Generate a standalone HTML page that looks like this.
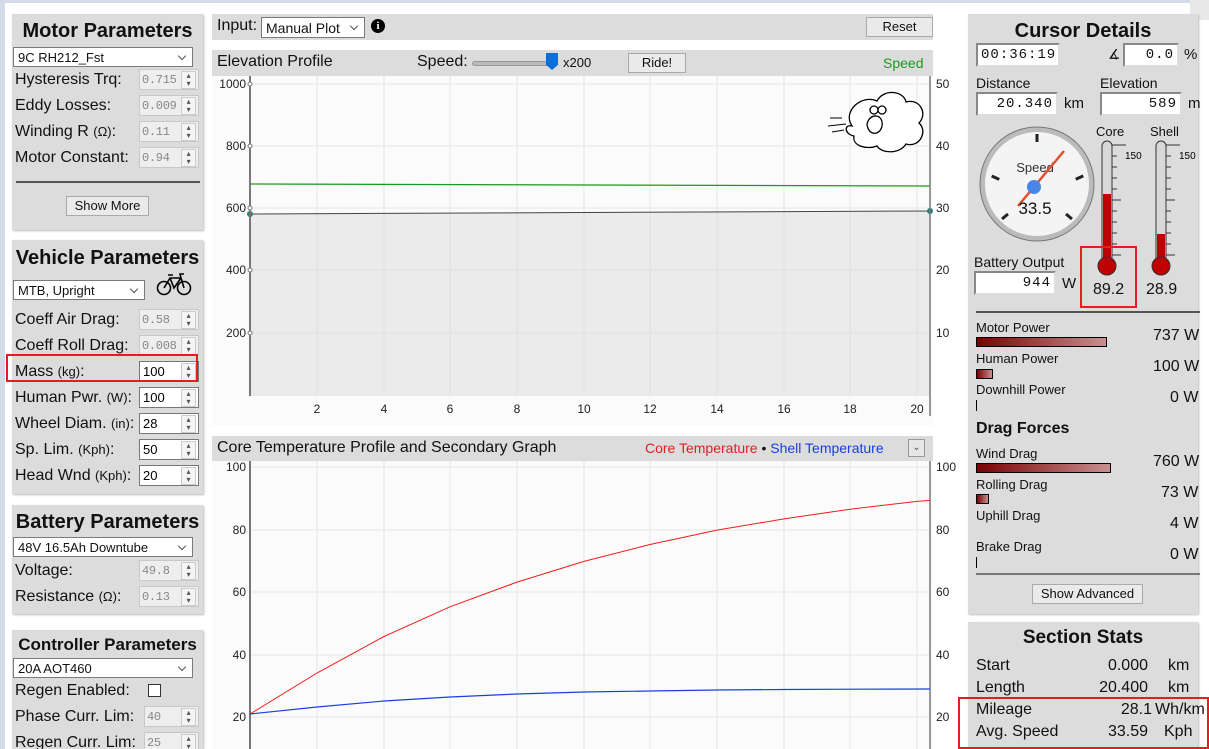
<!DOCTYPE html>
<html style="width:1209px;height:749px;overflow:hidden"><head><meta charset="utf-8"><style>
*{margin:0;padding:0;box-sizing:border-box}
body{width:1209px;height:749px;overflow:hidden;background:#fff;font-family:"Liberation Sans",Arial,sans-serif;color:#111;position:relative}
.a{position:absolute}
.pn{position:absolute;background:#dcdcdc;box-shadow:1px 1px 2px #bbb}
.h{font-weight:bold;font-size:20px;text-align:center;position:absolute;left:0;right:0}
.lb{position:absolute;font-size:16px;white-space:nowrap}
.lb small{font-size:13px}
.sel{position:absolute;background:#fff;border:1px solid #7a7a7a;font-size:13px;padding:2px 4px;white-space:nowrap}
.sel:after{content:"";position:absolute;right:7px;top:5px;width:5px;height:5px;border-right:1px solid #555;border-bottom:1px solid #555;transform:rotate(45deg)}
.sp{position:absolute;width:60px;height:21px;border:1px solid #c8c8c8;background:#eee;font-size:12px;color:#888;padding:3px 2px;font-family:"Liberation Mono",monospace;overflow:hidden;white-space:nowrap;letter-spacing:-0.3px}
.sp.on{background:#fff;border-color:#777;color:#000;font-family:"Liberation Sans",sans-serif;font-size:13px;padding:2px 3px;letter-spacing:0}
.sp:after{content:"▴\A▾";white-space:pre;position:absolute;right:2px;top:1px;width:13px;font-size:8px;line-height:8px;text-align:center;border:1px solid #ccc;background:#f4f4f4;color:#555;font-family:"Liberation Sans",sans-serif}
.btn{position:absolute;background:#eaeaea;border:1px solid #aaa;font-size:13px;text-align:center}
.box{position:absolute;background:#fff;border:2px solid #888;border-right-color:#ddd;border-bottom-color:#ddd;font-family:"Liberation Mono",monospace;font-size:14px;text-align:right;padding:2px 3px;letter-spacing:1px;white-space:nowrap;overflow:hidden}
.bar{position:absolute;height:10px;border:1px solid #000;background:linear-gradient(90deg,#7a0000,#c89090)}
.red{position:absolute;border:2px solid #e02020}
</style></head><body>
<div class="a" style="left:0;top:0;width:5px;height:749px;background:#d3dbe8"></div>
<div class="a" style="left:0;top:0;width:1209px;height:3px;background:#d3dbe8"></div>
<div class="a" style="left:1190px;top:0;width:19px;height:20px;background:#e8e8e8"></div>

<!-- Motor -->
<div class="pn" style="left:12px;top:14px;width:191px;height:216px">
<div class="h" style="top:6px">Motor Parameters</div>
<div class="sel" style="left:1px;top:33px;width:180px;height:20px">9C RH212_Fst</div>
<div class="lb" style="left:3px;top:57px">Hysteresis Trq:</div><div class="sp" style="left:127px;top:55px">0.715</div>
<div class="lb" style="left:3px;top:83px">Eddy Losses:</div><div class="sp" style="left:127px;top:81px">0.009</div>
<div class="lb" style="left:3px;top:109px">Winding R <small>(Ω)</small>:</div><div class="sp" style="left:127px;top:107px">0.11</div>
<div class="lb" style="left:3px;top:135px">Motor Constant:</div><div class="sp" style="left:127px;top:133px">0.94</div>
<div class="a" style="left:4px;top:167px;width:184px;height:2px;background:#555"></div>
<div class="btn" style="left:54px;top:182px;width:83px;height:20px;line-height:18px">Show More</div>
</div>
<!-- Vehicle -->
<div class="pn" style="left:12px;top:240px;width:191px;height:254px">
<div class="h" style="top:7px">Vehicle Parameters</div>
<div class="sel" style="left:1px;top:40px;width:132px;height:20px">MTB, Upright</div>
<svg class="a" style="left:144px;top:32px" width="36" height="24" viewBox="0 0 36 24" fill="none" stroke="#000" stroke-width="1.6"><circle cx="8" cy="16" r="6.5"/><circle cx="28" cy="16" r="6.5"/><path d="M8 16 L14 6 L25 6 L28 16 M14 6 L18 16 L25 6 M12 3 L17 3 M25 6 L24 2 L28 2"/></svg>
<div class="lb" style="left:3px;top:71px">Coeff Air Drag:</div><div class="sp" style="left:127px;top:69px">0.58</div>
<div class="lb" style="left:3px;top:97px">Coeff Roll Drag:</div><div class="sp" style="left:127px;top:95px">0.008</div>
<div class="lb" style="left:3px;top:123px">Mass <small>(kg)</small>:</div><div class="sp on" style="left:127px;top:121px">100</div>
<div class="lb" style="left:3px;top:149px">Human Pwr. <small>(W)</small>:</div><div class="sp on" style="left:127px;top:147px">100</div>
<div class="lb" style="left:3px;top:175px">Wheel Diam. <small>(in)</small>:</div><div class="sp on" style="left:127px;top:173px">28</div>
<div class="lb" style="left:3px;top:201px">Sp. Lim. <small>(Kph)</small>:</div><div class="sp on" style="left:127px;top:199px">50</div>
<div class="lb" style="left:3px;top:227px">Head Wnd <small>(Kph)</small>:</div><div class="sp on" style="left:127px;top:225px">20</div>
</div>
<div class="red" style="left:6px;top:354px;width:192px;height:28px"></div>
<!-- Battery -->
<div class="pn" style="left:12px;top:505px;width:191px;height:109px">
<div class="h" style="top:6px">Battery Parameters</div>
<div class="sel" style="left:1px;top:32px;width:180px;height:20px">48V 16.5Ah Downtube</div>
<div class="lb" style="left:3px;top:57px">Voltage:</div><div class="sp" style="left:127px;top:55px">49.8</div>
<div class="lb" style="left:3px;top:83px">Resistance <small>(Ω)</small>:</div><div class="sp" style="left:127px;top:81px">0.13</div>
</div>
<!-- Controller -->
<div class="pn" style="left:12px;top:630px;width:191px;height:119px">
<div class="h" style="top:5px;font-size:17px">Controller Parameters</div>
<div class="sel" style="left:1px;top:28px;width:180px;height:20px">20A AOT460</div>
<div class="lb" style="left:3px;top:52px">Regen Enabled:</div>
<div class="a" style="left:136px;top:54px;width:13px;height:13px;border:1px solid #333;background:#fff"></div>
<div class="lb" style="left:3px;top:78px">Phase Curr. Lim:</div><div class="sp" style="left:132px;top:76px;width:55px">40</div>
<div class="lb" style="left:3px;top:104px">Regen Curr. Lim:</div><div class="sp" style="left:132px;top:102px;width:55px">25</div>
</div>

<!-- Input bar -->
<div class="a" style="left:212px;top:14px;width:721px;height:26px;background:#dcdcdc"></div>
<div class="lb" style="left:217px;top:17px">Input:</div>
<div class="sel" style="left:261px;top:17px;width:104px;height:21px;font-size:14px">Manual Plot</div>
<div class="a" style="left:371px;top:19px;width:14px;height:14px;border-radius:50%;background:#000;color:#fff;font:bold 11px 'Liberation Serif',serif;text-align:center;line-height:14px">i</div>
<div class="btn" style="left:866px;top:17px;width:67px;height:20px;line-height:18px">Reset</div>

<!-- Elevation -->
<div class="a" style="left:212px;top:50px;width:721px;height:376px;background:#fbfbfb"></div>
<div class="a" style="left:212px;top:50px;width:721px;height:26px;background:#dcdcdc"></div>
<div class="lb" style="left:217px;top:53px">Elevation Profile</div>
<div class="lb" style="left:417px;top:53px">Speed:</div>
<div class="a" style="left:472px;top:61px;width:80px;height:5px;border-radius:3px;background:#bbb;border:1px solid #999"></div>
<div class="a" style="left:546px;top:53px;width:12px;height:17px;background:#0a6fd6;clip-path:polygon(0 0,100% 0,100% 70%,50% 100%,0 70%)"></div>
<div class="lb" style="left:563px;top:55px;font-size:13px">x200</div>
<div class="btn" style="left:628px;top:53px;width:58px;height:20px;line-height:18px">Ride!</div>
<div class="lb" style="left:883px;top:55px;font-size:14px;color:#1a9a1a">Speed</div>
<svg class="a" style="left:212px;top:76px" width="750" height="350">
<g stroke="#e6e6e6" stroke-width="1">
<line x1="38" y1="8" x2="718" y2="8"/><line x1="38" y1="70" x2="718" y2="70"/><line x1="38" y1="132" x2="718" y2="132"/><line x1="38" y1="194" x2="718" y2="194"/><line x1="38" y1="257" x2="718" y2="257"/>
<line x1="105" y1="0" x2="105" y2="320"/><line x1="172" y1="0" x2="172" y2="320"/><line x1="238" y1="0" x2="238" y2="320"/><line x1="305" y1="0" x2="305" y2="320"/><line x1="372" y1="0" x2="372" y2="320"/><line x1="438" y1="0" x2="438" y2="320"/><line x1="505" y1="0" x2="505" y2="320"/><line x1="572" y1="0" x2="572" y2="320"/><line x1="638" y1="0" x2="638" y2="320"/><line x1="705" y1="0" x2="705" y2="320"/>
</g>
<polygon points="38,138 718,135 718,320 38,320" fill="#ebebeb"/>
<g stroke="#e0e0e0"><line x1="38" y1="194" x2="718" y2="194"/><line x1="38" y1="257" x2="718" y2="257"/><line x1="105" y1="137" x2="105" y2="320"/><line x1="172" y1="137" x2="172" y2="320"/><line x1="238" y1="137" x2="238" y2="320"/><line x1="305" y1="137" x2="305" y2="320"/><line x1="372" y1="137" x2="372" y2="320"/><line x1="438" y1="136" x2="438" y2="320"/><line x1="505" y1="136" x2="505" y2="320"/><line x1="572" y1="136" x2="572" y2="320"/><line x1="638" y1="136" x2="638" y2="320"/><line x1="705" y1="136" x2="705" y2="320"/></g>
<line x1="38" y1="138" x2="718" y2="135" stroke="#444"/>
<line x1="38" y1="108" x2="718" y2="110" stroke="#1a9a1a" stroke-width="1.2"/>
<circle cx="38" cy="138" r="3" fill="#2a7a7a"/><circle cx="718" cy="135" r="3" fill="#2a7a7a"/>
<line x1="38" y1="0" x2="38" y2="320" stroke="#777" stroke-width="2"/>
<line x1="718" y1="0" x2="718" y2="340" stroke="#777" stroke-width="1.5"/>
<g fill="#fff" stroke="#777"><circle cx="38" cy="8" r="2"/><circle cx="38" cy="70" r="2"/><circle cx="38" cy="132" r="2"/><circle cx="38" cy="194" r="2"/><circle cx="38" cy="257" r="2"/></g>
<g font-size="12" fill="#222" text-anchor="end" font-family="Liberation Sans"><text x="34" y="12">1000</text><text x="34" y="74">800</text><text x="34" y="136">600</text><text x="34" y="198">400</text><text x="34" y="261">200</text></g>
<g font-size="12" fill="#222" font-family="Liberation Sans"><text x="724" y="12">50</text><text x="724" y="74">40</text><text x="724" y="136">30</text><text x="724" y="198">20</text><text x="724" y="261">10</text></g>
<g font-size="12" fill="#222" text-anchor="middle" font-family="Liberation Sans"><text x="105" y="337">2</text><text x="172" y="337">4</text><text x="238" y="337">6</text><text x="305" y="337">8</text><text x="372" y="337">10</text><text x="438" y="337">12</text><text x="505" y="337">14</text><text x="572" y="337">16</text><text x="638" y="337">18</text><text x="705" y="337">20</text></g>
<g fill="#fff" stroke="#000" stroke-width="1.3">
<path d="M640 50 C630 35 650 18 665 25 C672 12 692 15 694 26 C708 22 716 38 707 47 C716 55 708 72 694 68 C688 78 670 78 665 70 C655 74 640 70 642 60 C632 58 632 48 640 50 Z"/>
<path d="M655 48 C658 36 672 38 670 50 C668 60 656 60 655 48 Z"/>
<circle cx="662" cy="34" r="4"/><circle cx="670" cy="34" r="4"/>
</g>
<g stroke="#000" stroke-width="1"><line x1="618" y1="42" x2="630" y2="42"/><line x1="616" y1="50" x2="634" y2="48"/><line x1="620" y1="56" x2="632" y2="54"/></g>
</svg>

<!-- Secondary -->
<div class="a" style="left:212px;top:436px;width:721px;height:313px;background:#fbfbfb"></div>
<div class="a" style="left:212px;top:436px;width:721px;height:25px;background:#dcdcdc"></div>
<div class="lb" style="left:217px;top:439px">Core Temperature Profile and Secondary Graph</div>
<div class="lb" style="left:645px;top:440px;font-size:14px"><span style="color:#e02020">Core Temperature</span> • <span style="color:#1a3ee0">Shell Temperature</span></div>
<div class="a" style="left:908px;top:439px;width:17px;height:18px;border:1px solid #999;background:#e6e6e6;font-size:10px;text-align:center;line-height:16px;color:#555">⌄</div>
<svg class="a" style="left:212px;top:461px" width="750" height="290">
<g stroke="#e6e6e6"><line x1="38" y1="6" x2="718" y2="6"/><line x1="38" y1="69" x2="718" y2="69"/><line x1="38" y1="131" x2="718" y2="131"/><line x1="38" y1="194" x2="718" y2="194"/><line x1="38" y1="256" x2="718" y2="256"/>
<line x1="105" y1="0" x2="105" y2="290"/><line x1="172" y1="0" x2="172" y2="290"/><line x1="238" y1="0" x2="238" y2="290"/><line x1="305" y1="0" x2="305" y2="290"/><line x1="372" y1="0" x2="372" y2="290"/><line x1="438" y1="0" x2="438" y2="290"/><line x1="505" y1="0" x2="505" y2="290"/><line x1="572" y1="0" x2="572" y2="290"/><line x1="638" y1="0" x2="638" y2="290"/><line x1="705" y1="0" x2="705" y2="290"/></g>
<line x1="38" y1="0" x2="38" y2="290" stroke="#777" stroke-width="2"/>
<line x1="718" y1="0" x2="718" y2="290" stroke="#777" stroke-width="1.5"/>
<polyline fill="none" stroke="#ee1c1c" points="38,253 105,212 172,175.5 238,145.8 305,121.1 372,100.4 438,83.5 505,69.1 572,57.9 638,48.2 705,40.4 718,39.4"/>
<polyline fill="none" stroke="#1a3ee0" stroke-width="1.2" points="38,253 105,246 172,240 238,236 305,233 372,231 438,230 505,229 572,228.5 638,228.2 718,228"/>
<g font-size="12" fill="#222" text-anchor="end" font-family="Liberation Sans"><text x="34" y="10">100</text><text x="34" y="73">80</text><text x="34" y="135">60</text><text x="34" y="198">40</text><text x="34" y="260">20</text></g>
<g font-size="12" fill="#222" font-family="Liberation Sans"><text x="724" y="10">100</text><text x="724" y="73">80</text><text x="724" y="135">60</text><text x="724" y="198">40</text><text x="724" y="260">20</text></g>
</svg>

<!-- Cursor details -->
<div class="pn" style="left:968px;top:14px;width:230px;height:600px">
<div class="h" style="top:6px">Cursor Details</div>
<div class="box" style="left:8px;top:29px;width:84px;height:24px;text-align:left">00:36:19</div>
<div class="lb" style="left:140px;top:32px;font-size:14px">∡</div>
<div class="box" style="left:155px;top:29px;width:56px;height:24px">0.0</div>
<div class="lb" style="left:216px;top:32px;font-size:15px">%</div>
<div class="lb" style="left:8px;top:61px;font-size:14px">Distance</div>
<div class="box" style="left:8px;top:78px;width:82px;height:24px">20.340</div>
<div class="lb" style="left:96px;top:81px;font-size:15px">km</div>
<div class="lb" style="left:132px;top:61px;font-size:14px">Elevation</div>
<div class="box" style="left:132px;top:78px;width:82px;height:24px">589</div>
<div class="lb" style="left:220px;top:81px;font-size:15px">m</div>
<svg class="a" style="left:10px;top:110px" width="120" height="130" viewBox="0 0 120 130">
<circle cx="59" cy="60" r="57" fill="#bbb" stroke="#777"/><circle cx="59" cy="60" r="52" fill="#f4f4f4"/>
<g stroke="#222" stroke-width="3"><line x1="59" y1="10" x2="59" y2="18"/><line x1="13" y1="60" x2="21" y2="62" transform="rotate(10 59 60)"/><line x1="98" y1="62" x2="106" y2="60" transform="rotate(-10 59 60)"/><line x1="24" y1="95" x2="30" y2="90"/><line x1="94" y1="95" x2="88" y2="90"/></g>
<text x="57" y="48" font-size="13" text-anchor="middle" font-family="Liberation Sans" fill="#333">Speed</text>
<line x1="40" y1="82" x2="86" y2="27" stroke="#e05030" stroke-width="2.5"/>
<circle cx="56" cy="63" r="7" fill="#4a86e8"/>
<text x="57" y="90" font-size="17" text-anchor="middle" font-family="Liberation Sans" fill="#111">33.5</text>
</svg>
<div class="lb" style="left:128px;top:110px;font-size:13px">Core</div>
<div class="lb" style="left:182px;top:110px;font-size:13px">Shell</div>
<svg class="a" style="left:125px;top:125px" width="110" height="140">
<rect x="9" y="2" width="10" height="125" rx="5" fill="#d8d8d8" stroke="#333"/>
<rect x="10" y="55" width="8" height="70" fill="#c00000"/>
<circle cx="14" cy="127" r="9" fill="#c00000" stroke="#333"/>
<g stroke="#333"><line x1="19" y1="6" x2="33" y2="6"/><line x1="19" y1="17" x2="24" y2="17"/><line x1="19" y1="28" x2="24" y2="28"/><line x1="19" y1="39" x2="24" y2="39"/><line x1="19" y1="50" x2="24" y2="50"/><line x1="19" y1="61" x2="28" y2="61"/><line x1="19" y1="72" x2="24" y2="72"/><line x1="19" y1="83" x2="24" y2="83"/><line x1="19" y1="94" x2="24" y2="94"/><line x1="19" y1="105" x2="24" y2="105"/><line x1="19" y1="116" x2="28" y2="116"/></g>
<text x="32" y="20" font-size="10" font-family="Liberation Sans">150</text>
<rect x="63" y="2" width="10" height="125" rx="5" fill="#d8d8d8" stroke="#333"/>
<rect x="64" y="95" width="8" height="30" fill="#c00000"/>
<circle cx="68" cy="127" r="9" fill="#c00000" stroke="#333"/>
<g stroke="#333"><line x1="73" y1="6" x2="87" y2="6"/><line x1="73" y1="17" x2="78" y2="17"/><line x1="73" y1="28" x2="78" y2="28"/><line x1="73" y1="39" x2="78" y2="39"/><line x1="73" y1="50" x2="78" y2="50"/><line x1="73" y1="61" x2="82" y2="61"/><line x1="73" y1="72" x2="78" y2="72"/><line x1="73" y1="83" x2="78" y2="83"/><line x1="73" y1="94" x2="78" y2="94"/><line x1="73" y1="105" x2="78" y2="105"/><line x1="73" y1="116" x2="82" y2="116"/></g>
<text x="86" y="20" font-size="10" font-family="Liberation Sans">150</text>
</svg>
<div class="lb" style="left:6px;top:240px;font-size:14px">Battery Output</div>
<div class="box" style="left:6px;top:257px;width:82px;height:24px">944</div>
<div class="lb" style="left:94px;top:261px;font-size:15px">W</div>
<div class="lb" style="left:125px;top:267px;font-size:16px">89.2</div>
<div class="lb" style="left:178px;top:267px;font-size:16px">28.9</div>
<div class="a" style="left:8px;top:297px;width:224px;height:2px;background:#555"></div>
<div class="lb" style="left:8px;top:306px;font-size:13px">Motor Power</div><div class="bar" style="left:8px;top:323px;width:131px"></div><div class="lb" style="left:185px;top:313px;font-size:16px">737 W</div>
<div class="lb" style="left:8px;top:337px;font-size:13px">Human Power</div><div class="bar" style="left:8px;top:355px;width:17px"></div><div class="lb" style="left:185px;top:344px;font-size:16px">100 W</div>
<div class="lb" style="left:8px;top:368px;font-size:13px">Downhill Power</div><div class="a" style="left:8px;top:386px;width:1px;height:11px;background:#000"></div><div class="lb" style="left:202px;top:375px;font-size:16px">0 W</div>
<div class="lb" style="left:8px;top:406px;font-size:16px;font-weight:bold">Drag Forces</div>
<div class="lb" style="left:8px;top:432px;font-size:13px">Wind Drag</div><div class="bar" style="left:8px;top:449px;width:135px"></div><div class="lb" style="left:185px;top:439px;font-size:16px">760 W</div>
<div class="lb" style="left:8px;top:463px;font-size:13px">Rolling Drag</div><div class="bar" style="left:8px;top:480px;width:13px"></div><div class="lb" style="left:193px;top:470px;font-size:16px">73 W</div>
<div class="lb" style="left:8px;top:494px;font-size:13px">Uphill Drag</div><div class="lb" style="left:202px;top:501px;font-size:16px">4 W</div>
<div class="lb" style="left:8px;top:525px;font-size:13px">Brake Drag</div><div class="a" style="left:8px;top:543px;width:1px;height:11px;background:#000"></div><div class="lb" style="left:202px;top:532px;font-size:16px">0 W</div>
<div class="a" style="left:8px;top:559px;width:224px;height:2px;background:#777"></div>
<div class="btn" style="left:64px;top:570px;width:111px;height:20px;line-height:18px">Show Advanced</div>
</div>
<div class="red" style="left:1080px;top:246px;width:57px;height:62px"></div>

<!-- Section stats -->
<div class="pn" style="left:968px;top:622px;width:230px;height:127px">
<div class="h" style="top:5px;font-size:19px">Section Stats</div>
<div class="lb" style="left:8px;top:35px">Start</div><div class="lb" style="left:100px;width:80px;text-align:right;top:35px">0.000</div><div class="lb" style="left:200px;top:35px">km</div>
<div class="lb" style="left:8px;top:57px">Length</div><div class="lb" style="left:100px;width:80px;text-align:right;top:57px">20.400</div><div class="lb" style="left:200px;top:57px">km</div>
<div class="lb" style="left:8px;top:79px">Mileage</div><div class="lb" style="left:104px;width:80px;text-align:right;top:79px">28.1</div><div class="lb" style="left:187px;top:79px">Wh/km</div>
<div class="lb" style="left:8px;top:101px">Avg. Speed</div><div class="lb" style="left:100px;width:80px;text-align:right;top:101px">33.59</div><div class="lb" style="left:196px;top:101px">Kph</div>
</div>
<div class="red" style="left:958px;top:697px;width:251px;height:52px"></div>
</body></html>
